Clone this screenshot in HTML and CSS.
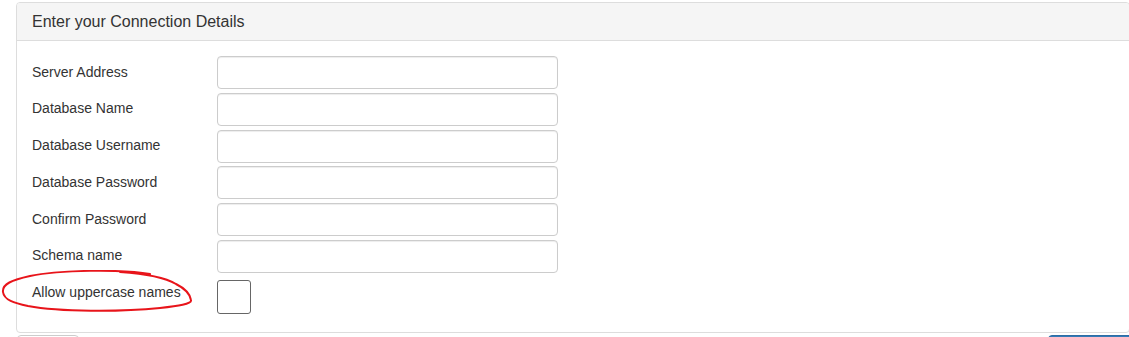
FILE: index.html
```html
<!DOCTYPE html>
<html>
<head>
	<meta charset="utf-8" />
	<title>Connection Details</title>
	<link rel="stylesheet" href="styles.css">
</head>
<body>
	<div class="page">
		<div class="panel">
			<div class="panel-heading">Enter your Connection Details</div>
			<form class="panel-body">
				<div class="row">
					<label for="server">Server Address</label>
					<input id="server" type="text" class="field">
				</div>
				<div class="row">
					<label for="dbname">Database Name</label>
					<input id="dbname" type="text" class="field">
				</div>
				<div class="row">
					<label for="dbuser">Database Username</label>
					<input id="dbuser" type="text" class="field">
				</div>
				<div class="row">
					<label for="dbpass">Database Password</label>
					<input id="dbpass" type="password" class="field">
				</div>
				<div class="row">
					<label for="dbconfirm">Confirm Password</label>
					<input id="dbconfirm" type="password" class="field">
				</div>
				<div class="row">
					<label for="schema">Schema name</label>
					<input id="schema" type="text" class="field">
				</div>
				<div class="row row--check">
					<label for="upper">Allow uppercase names</label>
					<span id="upper" class="check"></span>
				</div>
				<!-- red circle someone drew round the label -->
				<svg class="scribble" width="200" height="50" viewBox="0 0 200 50">
					<path d="M150 4 C120 -1 60 0 30 6 C12 10 2 14 3 22 C4 30 14 33 28 36 C60 42 120 42 160 38 C178 36 192 34 191 30 C190 24 184 18 176 14 C166 8 150 4 120 2" fill="none" stroke="#e8141a" stroke-width="2" stroke-linecap="round"/>
				</svg>
			</form>
		</div>
		<div class="buttons">
			<span class="btn btn--default"></span>
			<span class="btn btn--primary"></span>
		</div>
	</div>
</body>
</html>
```

FILE: styles.css
```css
body {
	margin: 0;
	font: 14px/1.42857 "Liberation Sans", Arial, sans-serif;
	color: #333;
	background: #fff;
	overflow: hidden;
}
.page {
	padding: 2px 0 0 16px;
	width: 1114px;
}
.panel {
	border: 1px solid #ddd;
	border-radius: 4px;
	background: #fff;
}
.panel-heading {
	background: #f5f5f5;
	border-bottom: 1px solid #ddd;
	border-radius: 3px 3px 0 0;
	padding: 10px 15px 9px;
	font-size: 16px;
	line-height: 18px;
	color: #333;
}
.panel-body {
	position: relative;
	padding: 15px 15px 18px;
	display: flex;
	flex-direction: column;
	gap: 3.8px;
}
.row {
	display: flex;
	align-items: center;
}
.row label {
	width: 185px;
	flex: none;
}
.field {
	box-sizing: border-box;
	width: 341px;
	height: 33px;
	margin: 0;
	border: 1px solid #ccc;
	border-radius: 4px;
	background: #fff;
	box-shadow: inset 0 1px 1px rgba(0, 0, 0, .075);
}
.row--check {
	margin-top: 3px;
}
.row--check label {
	margin-top: -8px;
}
.check {
	box-sizing: border-box;
	width: 34px;
	height: 34px;
	border: 1px solid #666;
	border-radius: 3px;
}
.scribble {
	position: absolute;
	left: -17px;
	top: 229px;
}
.buttons {
	display: flex;
	justify-content: space-between;
	margin-top: 2px;
	height: 2px;
	overflow: hidden;
}
.btn {
	display: block;
	height: 20px;
	border-radius: 4px;
}
.btn--default {
	width: 60px;
	margin-left: 1px;
	border: 1px solid #ccc;
}
.btn--primary {
	width: 90px;
	margin-right: -10px;
	background: #337ab7;
	border: 1px solid #2e6da4;
}
```
